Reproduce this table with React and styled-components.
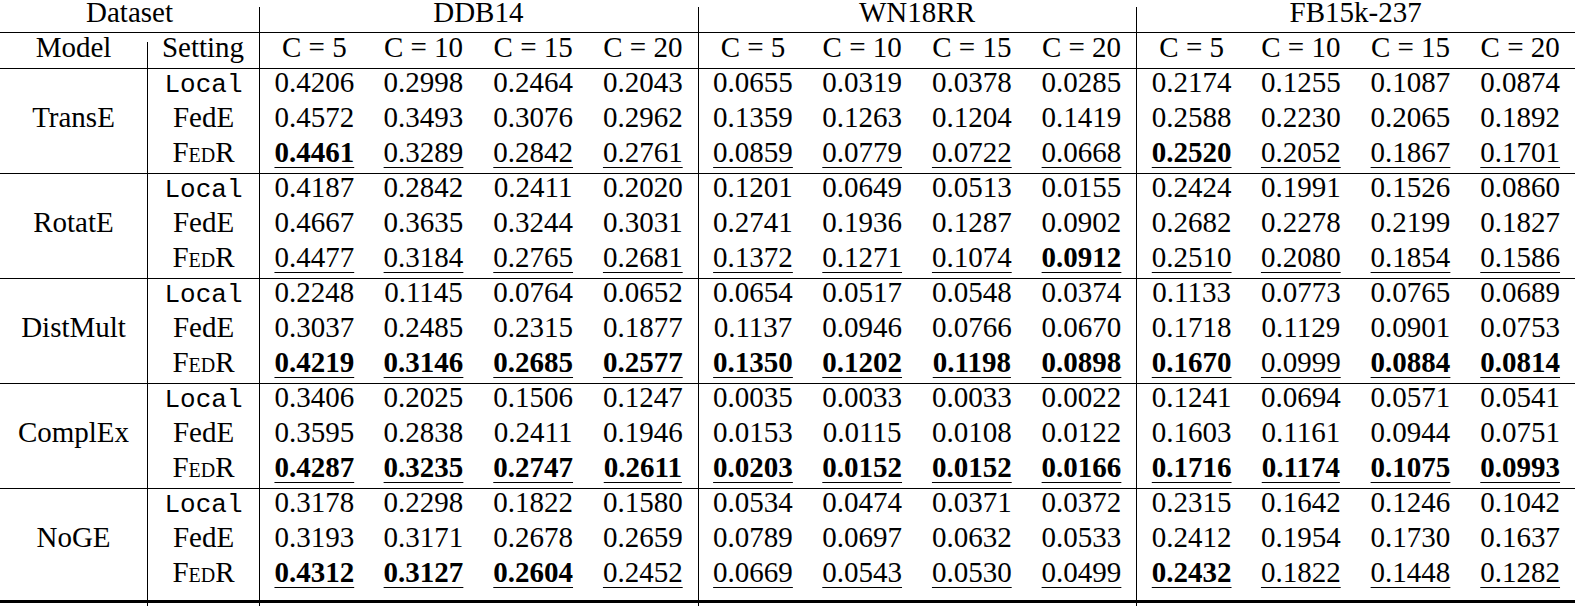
import React from "react";
import styled, { createGlobalStyle } from "styled-components";

const GlobalStyle = createGlobalStyle`
  html, body {
    margin: 0;
    padding: 0;
    background: #fff;
  }
  body {
    overflow: hidden;
  }
`;

const Table = styled.div`
  display: grid;
  grid-template-columns: 147px 112px repeat(12, 1fr);
  width: 1575px;
  font-family: "Liberation Serif", "Times New Roman", serif;
  font-size: 29px;
  color: #000;
`;

const Rule = styled.div`
  grid-column: 1 / -1;
  height: ${(p) => (p.$thick ? 3 : 1)}px;
  background: #000;
`;

const TitleCell = styled.div`
  grid-column: span ${(p) => p.$span};
  height: 32px;
  line-height: 24px;
  text-align: center;
  white-space: nowrap;
  background: ${(p) =>
    p.$divider ? "linear-gradient(#000, #000) left 7px / 1px 100% no-repeat" : "none"};
`;

const HeadCell = styled.div`
  height: 35px;
  line-height: 28px;
  text-align: center;
  white-space: nowrap;
  border-left: ${(p) => (p.$divider ? "1px solid #000" : "none")};
  background: ${(p) =>
    p.$inset ? "linear-gradient(#000, #000) left 9px / 1px 100% no-repeat" : "none"};
`;

const ModelCell = styled.div`
  grid-row: span 3;
  padding-top: 35px;
  line-height: 26px;
  text-align: center;
  white-space: nowrap;
`;

const Cell = styled.div`
  height: ${(p) => p.$h}px;
  line-height: 26px;
  text-align: center;
  white-space: nowrap;
  border-left: ${(p) => (p.$divider ? "1px solid #000" : "none")};
`;

const TailCell = styled.div`
  height: 3px;
  border-left: ${(p) => (p.$divider ? "1px solid #000" : "none")};
`;

const Value = styled.span`
  font-weight: ${(p) => (p.$bold ? 700 : 400)};
  text-decoration: ${(p) => (p.$under ? "underline" : "none")};
  text-decoration-thickness: 1px;
  text-underline-offset: 5px;
`;

const Mono = styled.span`
  font-family: "Liberation Mono", "Courier New", monospace;
  font-size: 26px;
`;

const SmallCaps = styled.span`
  font-variant: small-caps;
`;

// "b" = bold + underlined, "u" = underlined
const groups = [
  {
    model: "TransE",
    rows: [
      "0.4206 0.2998 0.2464 0.2043 0.0655 0.0319 0.0378 0.0285 0.2174 0.1255 0.1087 0.0874",
      "0.4572 0.3493 0.3076 0.2962 0.1359 0.1263 0.1204 0.1419 0.2588 0.2230 0.2065 0.1892",
      "b0.4461 u0.3289 u0.2842 u0.2761 u0.0859 u0.0779 u0.0722 u0.0668 b0.2520 u0.2052 u0.1867 u0.1701",
    ],
  },
  {
    model: "RotatE",
    rows: [
      "0.4187 0.2842 0.2411 0.2020 0.1201 0.0649 0.0513 0.0155 0.2424 0.1991 0.1526 0.0860",
      "0.4667 0.3635 0.3244 0.3031 0.2741 0.1936 0.1287 0.0902 0.2682 0.2278 0.2199 0.1827",
      "u0.4477 u0.3184 u0.2765 u0.2681 u0.1372 u0.1271 u0.1074 b0.0912 u0.2510 u0.2080 u0.1854 u0.1586",
    ],
  },
  {
    model: "DistMult",
    rows: [
      "0.2248 0.1145 0.0764 0.0652 0.0654 0.0517 0.0548 0.0374 0.1133 0.0773 0.0765 0.0689",
      "0.3037 0.2485 0.2315 0.1877 0.1137 0.0946 0.0766 0.0670 0.1718 0.1129 0.0901 0.0753",
      "b0.4219 b0.3146 b0.2685 b0.2577 b0.1350 b0.1202 b0.1198 b0.0898 b0.1670 u0.0999 b0.0884 b0.0814",
    ],
  },
  {
    model: "ComplEx",
    rows: [
      "0.3406 0.2025 0.1506 0.1247 0.0035 0.0033 0.0033 0.0022 0.1241 0.0694 0.0571 0.0541",
      "0.3595 0.2838 0.2411 0.1946 0.0153 0.0115 0.0108 0.0122 0.1603 0.1161 0.0944 0.0751",
      "b0.4287 b0.3235 b0.2747 b0.2611 b0.0203 b0.0152 b0.0152 b0.0166 b0.1716 b0.1174 b0.1075 b0.0993",
    ],
  },
  {
    model: "NoGE",
    rows: [
      "0.3178 0.2298 0.1822 0.1580 0.0534 0.0474 0.0371 0.0372 0.2315 0.1642 0.1246 0.1042",
      "0.3193 0.3171 0.2678 0.2659 0.0789 0.0697 0.0632 0.0533 0.2412 0.1954 0.1730 0.1637",
      "b0.4312 b0.3127 b0.2604 u0.2452 u0.0669 u0.0543 u0.0530 u0.0499 b0.2432 u0.1822 u0.1448 u0.1282",
    ],
  },
];

const datasets = ["DDB14", "WN18RR", "FB15k-237"];
const sizes = [5, 10, 15, 20];

function settingLabel(i) {
  if (i === 0) return <Mono>Local</Mono>;
  if (i === 1) return "FedE";
  return <SmallCaps>FedR</SmallCaps>;
}

function parseValue(raw) {
  const flag = raw[0];
  if (flag === "b") return { text: raw.slice(1), bold: true, under: true };
  if (flag === "u") return { text: raw.slice(1), bold: false, under: true };
  return { text: raw, bold: false, under: false };
}

function Group({ group, last }) {
  return (
    <>
      <ModelCell>{group.model}</ModelCell>
      {group.rows.map((row, r) => {
        const h = r === 2 ? (last ? 41 : 34) : 35;
        return (
          <React.Fragment key={r}>
            <Cell $h={h} $divider>
              {settingLabel(r)}
            </Cell>
            {row.split(" ").map((raw, c) => {
              const v = parseValue(raw);
              return (
                <Cell key={c} $h={h} $divider={c % 4 === 0}>
                  <Value $bold={v.bold} $under={v.under}>
                    {v.text}
                  </Value>
                </Cell>
              );
            })}
          </React.Fragment>
        );
      })}
    </>
  );
}

export default function App() {
  return (
    <>
      <GlobalStyle />
      <Table>
        <TitleCell $span={2}>Dataset</TitleCell>
        {datasets.map((d) => (
          <TitleCell key={d} $span={4} $divider>
            {d}
          </TitleCell>
        ))}
        <Rule />

        <HeadCell>Model</HeadCell>
        <HeadCell $inset>Setting</HeadCell>
        {datasets.map((d) =>
          sizes.map((s, i) => (
            <HeadCell key={d + s} $divider={i === 0}>
              C = {s}
            </HeadCell>
          ))
        )}
        <Rule />

        {groups.map((g, i) => (
          <React.Fragment key={g.model}>
            <Group group={g} last={i === groups.length - 1} />
            <Rule $thick={i === groups.length - 1} />
          </React.Fragment>
        ))}

        {Array.from({ length: 14 }).map((_, i) => (
          <TailCell key={i} $divider={i === 1 || i === 2 || i === 6 || i === 10} />
        ))}
      </Table>
    </>
  );
}
